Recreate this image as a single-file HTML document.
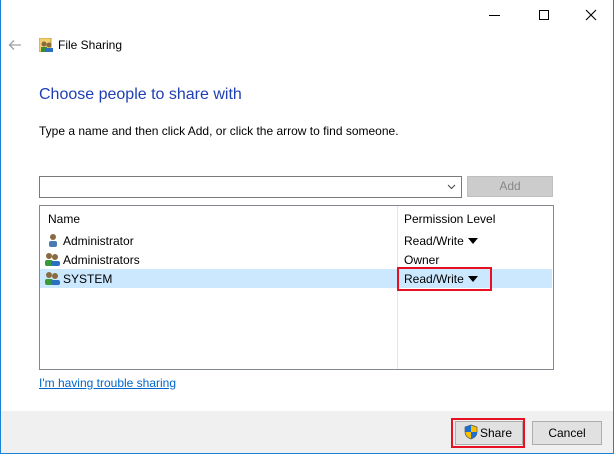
<!DOCTYPE html>
<html><head><style>
*{margin:0;padding:0;box-sizing:border-box}
body{width:614px;height:454px;overflow:hidden;background:#fff;font-family:"Liberation Sans",sans-serif;font-size:12px;color:#000;position:relative}
.a{position:absolute}
.win{left:0;top:0;width:614px;height:454px;border:1px solid #1883d7;border-top:none}
.tri{display:inline-block;width:0;height:0;border-left:5px solid transparent;border-right:5px solid transparent;border-top:6px solid #000;margin-left:4px;vertical-align:1px}
</style></head><body>
<div class="a win"></div>
<div class="a" style="left:489px;top:15px;width:11px;height:1px;background:#000"></div>
<div class="a" style="left:539px;top:10px;width:10px;height:10px;border:1px solid #000"></div>
<svg class="a" style="left:585px;top:9px" width="12" height="12"><path d="M1 1L11 11M11 1L1 11" stroke="#000" stroke-width="1.1"/></svg>
<svg class="a" style="left:8px;top:39px" width="14" height="12"><path d="M13 6H2M6 1.5L1.5 6L6 10.5" stroke="#a0a0a0" stroke-width="1.3" fill="none"/></svg>
<svg class="a" style="left:39px;top:38px" width="14" height="14"><rect x="0" y="0" width="12" height="14" fill="#f0d070" stroke="#c9a030"/><circle cx="5" cy="6" r="2.5" fill="#8a6a40"/><rect x="2" y="9" width="6" height="5" fill="#3a8a3a"/><circle cx="10" cy="7" r="2.5" fill="#8a6a40"/><rect x="7" y="10" width="7" height="4" fill="#2a70c0"/></svg>
<div class="a" style="left:58px;top:38px">File Sharing</div>
<div class="a" style="left:39px;top:86px;font-size:16px;color:#1e3fb4">Choose people to share with</div>
<div class="a" style="left:39px;top:124px">Type a name and then click Add, or click the arrow to find someone.</div>
<div class="a" style="left:39px;top:176px;width:423px;height:22px;border:1px solid #7a7a7a"></div>
<svg class="a" style="left:447px;top:184px" width="9" height="6"><path d="M1 1L4.5 4.5L8 1" stroke="#444" fill="none"/></svg>
<div class="a" style="left:467px;top:176px;width:86px;height:21px;background:#ccc;border:1px solid #bfbfbf;color:#888;text-align:center;line-height:19px">Add</div>
<div class="a" style="left:39px;top:205px;width:515px;height:165px;border:1px solid #828790"></div>
<div class="a" style="left:397px;top:206px;width:1px;height:163px;background:#e5e5e5"></div>
<div class="a" style="left:40px;top:269px;width:512px;height:19px;background:#cce8ff"></div>
<div class="a" style="left:48px;top:212px">Name</div>
<div class="a" style="left:404px;top:212px">Permission Level</div>
<svg class="a" style="left:47px;top:233px" width="12" height="14"><circle cx="6" cy="4" r="3" fill="#8a6a40"/><rect x="2" y="8" width="8" height="6" rx="2" fill="#4a7ab0"/></svg>
<div class="a" style="left:63px;top:234px">Administrator</div>
<svg class="a" style="left:44px;top:252px" width="16" height="14"><circle cx="5" cy="4" r="3" fill="#8a6a40"/><rect x="1" y="8" width="8" height="6" rx="2" fill="#3a9a3a"/><circle cx="11" cy="5" r="3" fill="#8a6a40"/><rect x="7" y="9" width="9" height="5" rx="2" fill="#2a70c0"/></svg>
<div class="a" style="left:63px;top:253px">Administrators</div>
<svg class="a" style="left:44px;top:271px" width="16" height="14"><circle cx="5" cy="4" r="3" fill="#8a6a40"/><rect x="1" y="8" width="8" height="6" rx="2" fill="#3a9a3a"/><circle cx="11" cy="5" r="3" fill="#8a6a40"/><rect x="7" y="9" width="9" height="5" rx="2" fill="#2a70c0"/></svg>
<div class="a" style="left:63px;top:272px">SYSTEM</div>
<div class="a" style="left:404px;top:234px">Read/Write<span class="tri"></span></div>
<div class="a" style="left:404px;top:253px">Owner</div>
<div class="a" style="left:404px;top:272px">Read/Write<span class="tri"></span></div>
<div class="a" style="left:397px;top:267px;width:95px;height:24px;border:2px solid #e81123"></div>
<div class="a" style="left:39px;top:376px;color:#0066cc;text-decoration:underline">I'm having trouble sharing</div>
<div class="a" style="left:1px;top:411px;width:612px;height:42px;background:#f0f0f0"></div>
<div class="a" style="left:455px;top:421px;width:68px;height:24px;background:#e1e1e1;border:1px solid #adadad"></div>
<svg class="a" style="left:464px;top:424px" width="14" height="16"><path d="M7 1L13 3V8C13 12 10 14 7 15C4 14 1 12 1 8V3Z" fill="#f6c000" stroke="#555" stroke-width=".7"/><path d="M7 1V8H1V3Z" fill="#1d6fd0"/><path d="M7 8H13C13 12 10 14 7 15Z" fill="#1d6fd0"/></svg>
<div class="a" style="left:480px;top:426px">Share</div>
<div class="a" style="left:451px;top:418px;width:74px;height:30px;border:2px solid #e81123"></div>
<div class="a" style="left:532px;top:421px;width:70px;height:24px;background:#e1e1e1;border:1px solid #adadad;text-align:center;line-height:22px">Cancel</div>
</body></html>
